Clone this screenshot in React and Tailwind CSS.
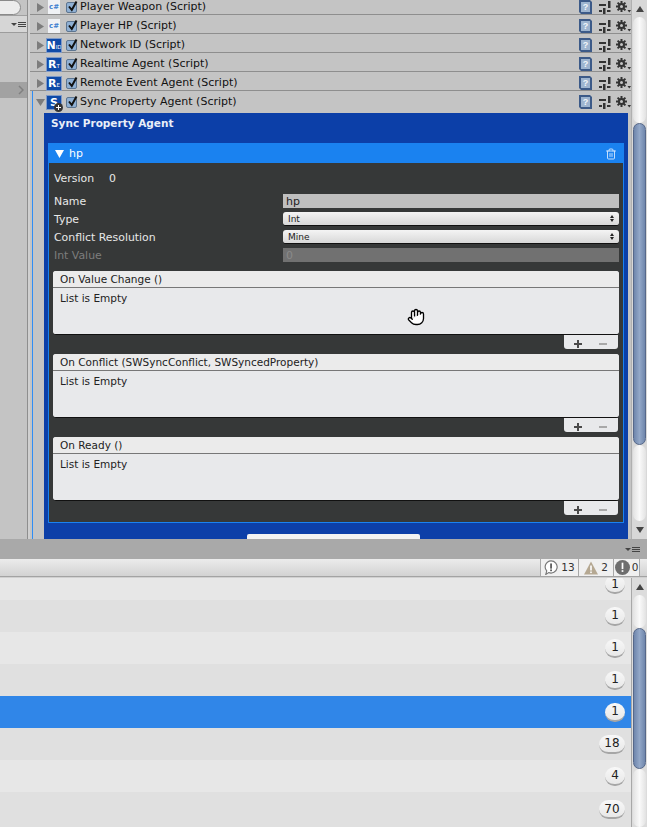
import React from 'react';
import { Hand, Trash2 } from 'lucide-react';

const scripts = [
  { name: 'Player Weapon (Script)', kind: 'cs' },
  { name: 'Player HP (Script)', kind: 'cs' },
  { name: 'Network ID (Script)', big: 'N', small: 'ID' },
  { name: 'Realtime Agent (Script)', big: 'R', small: 'T' },
  { name: 'Remote Event Agent (Script)', big: 'R', small: 'E' },
];

const consoleRows = [
  { count: '1', bg: 'bg-[#e7e7e7]', h: 'h-[22px]', clip: true },
  { count: '1', bg: 'bg-[#e0e0e0]', h: 'h-[32px]' },
  { count: '1', bg: 'bg-[#e7e7e7]', h: 'h-[32px]' },
  { count: '1', bg: 'bg-[#e0e0e0]', h: 'h-[32px]' },
  { count: '1', bg: 'bg-[#3086e8]', h: 'h-[32px]' },
  { count: '18', bg: 'bg-[#e0e0e0]', h: 'h-[32px]' },
  { count: '4', bg: 'bg-[#e7e7e7]', h: 'h-[32px]' },
  { count: '70', bg: 'bg-[#e0e0e0]', h: 'h-[35px]' },
];

const HelpBook = () => (
  <svg width="13" height="14" viewBox="0 0 13 14">
    <path d="M0 0 H11 L13 2 V14 H2 L0 12 Z" fill="#3c5a88" />
    <rect x="2" y="2" width="9" height="10" fill="#9db4cf" />
    <text x="6.5" y="10" fontSize="9" fontWeight="700" textAnchor="middle" fill="#f2f6fa" fontFamily="Liberation Sans, sans-serif">?</text>
  </svg>
);

const Sliders = () => (
  <svg width="12" height="13" viewBox="0 0 12 13" fill="#333">
    <rect x="0" y="3" width="7" height="2" />
    <rect x="9" y="0" width="2.5" height="7" />
    <rect x="0" y="9" width="3" height="2" />
    <rect x="4" y="7" width="2.5" height="6" />
    <rect x="8" y="9" width="3.5" height="2" />
  </svg>
);

const Gear = () => (
  <svg width="15" height="13" viewBox="0 0 15 13">
    <g stroke="#333" strokeWidth="2">
      <line x1="5.5" y1="0" x2="5.5" y2="11" />
      <line x1="0" y1="5.5" x2="11" y2="5.5" />
      <line x1="1.6" y1="1.6" x2="9.4" y2="9.4" />
      <line x1="9.4" y1="1.6" x2="1.6" y2="9.4" />
    </g>
    <circle cx="5.5" cy="5.5" r="3.6" fill="#333" />
    <circle cx="5.5" cy="5.5" r="1.5" fill="#c4c4c4" />
    <path d="M11.5 9 H15 L13.25 11.5 Z" fill="#333" />
  </svg>
);

const Check = () => (
  <span className="w-[11px] h-[11px] rounded-[2px] bg-[#8fb0d4] border border-[#5d7590] flex items-center justify-center shrink-0">
    <svg width="13" height="13" viewBox="0 0 13 13" className="-mt-[2px] -mr-[1px] shrink-0">
      <path d="M3 6.5 L5.8 10 L10.5 1.5" fill="none" stroke="#111" strokeWidth="2" />
    </svg>
  </span>
);

const Arrow = ({ open }) => (
  <svg width="9" height="9" viewBox="0 0 9 9" className="shrink-0">
    {open ? <path d="M0 1 H9 L4.5 8 Z" fill="#7c7c7c" /> : <path d="M1 0 L8 4.5 L1 9 Z" fill="#7c7c7c" />}
  </svg>
);

const CsIcon = () => (
  <span className="w-[12px] h-[14px] bg-[#f0f2f5] flex items-center justify-center text-[7px] font-bold text-[#3d7fd0] shrink-0">c#</span>
);

const AgentIcon = ({ big, small }) => (
  <span className="w-[16px] h-[15px] bg-[#0f4aa8] border border-[#7f9ac8] flex items-baseline justify-center text-white font-bold text-[11px] leading-[13px] shrink-0 overflow-hidden">
    {big}
    <span className="text-[5.5px] font-normal">{small}</span>
  </span>
);

const ComponentTools = () => (
  <div className="flex items-center">
    <span className="mr-[7px] flex"><HelpBook /></span>
    <span className="mr-[5px] flex"><Sliders /></span>
    <Gear />
  </div>
);

const ScriptRow = ({ s }) => (
  <div className="h-[19px] flex items-center border-b border-[#8e8e8e] pl-[6px] pt-[4px] shrink-0">
    <Arrow />
    <span className="w-[16px] ml-[1px] flex justify-center mr-[4px]">
      {s.kind === 'cs' ? <CsIcon /> : <AgentIcon big={s.big} small={s.small} />}
    </span>
    <Check />
    <span className="ml-[3px] text-[11px] font-medium text-[#111] flex-1">{s.name}</span>
    <ComponentTools />
  </div>
);

const Field = ({ label, dim, children }) => (
  <div className="flex items-center h-[14px] mb-[4px]">
    <span className={`w-[229px] text-[10.9px] pt-[2px] ${dim ? 'text-[#7d7d7d]' : 'text-[#e8e8e8]'}`}>{label}</span>
    <div className="flex-1">{children}</div>
  </div>
);

const Select = ({ value }) => (
  <div className="h-[14px] rounded-[3px] bg-gradient-to-b from-[#f4f4f4] to-[#d8d8d8] border-b border-[#111] flex items-center justify-between px-[5px] text-[9px] text-[#222]">
    <span className="pt-[2px]">{value}</span>
    <span className="flex flex-col gap-[1px]">
      <span className="border-x-[2px] border-b-[3px] border-x-transparent border-b-[#222]" />
      <span className="border-x-[2px] border-t-[3px] border-x-transparent border-t-[#222]" />
    </span>
  </div>
);

const EventBox = ({ title }) => (
  <div className="mt-[5px] first:mt-0">
    <div className="h-[64px] rounded-[3px] bg-[#e8e9eb] border-b border-[#111] flex flex-col">
      <div className="h-[17px] border-b border-[#777] px-[7px] text-[10.5px] leading-[16px] text-[#222] bg-[#ebebeb] rounded-t-[3px]">{title}</div>
      <div className="px-[7px] pt-[2px] text-[10.5px] leading-[16px] text-[#222]">List is Empty</div>
    </div>
    <div className="ml-auto mr-[1px] w-[54px] h-[14px] rounded-b-[3px] bg-[#e8e9eb] flex items-center pl-[9px] pt-[3px] gap-[15px]">
      <svg width="10" height="10" viewBox="0 0 10 10"><path d="M4 1 H6 V4 H9 V6 H6 V9 H4 V6 H1 V4 H4 Z" fill="#4a4a4a" /></svg>
      <svg width="10" height="10" viewBox="0 0 10 10"><rect x="1" y="4" width="8" height="2" fill="#a8a8a8" /></svg>
    </div>
  </div>
);

const UpArrow = () => <span className="border-x-[4px] border-b-[6px] border-x-transparent border-b-[#444]" />;
const DownArrow = () => <span className="border-x-[4px] border-t-[6px] border-x-transparent border-t-[#444]" />;

const Thumb = ({ className }) => (
  <div className={`w-[13px] mx-auto rounded-full bg-gradient-to-r from-[#6f86ac] via-[#93a8c8] to-[#6f86ac] border border-[#56688a] ${className}`} />
);

const Track = ({ className }) => (
  <div className={`w-[13px] mx-auto rounded-full bg-gradient-to-r from-[#e2e2e2] via-[#fafafa] to-[#e2e2e2] ${className}`} />
);

const Badge = ({ n }) => (
  <span className={`h-[19px] rounded-full bg-gradient-to-b from-[#f8f8f8] to-[#e8e8e8] border-b-2 border-[#a6a6a6] flex items-center justify-center text-[12px] leading-none text-[#222] shrink-0 ${n.length > 1 ? 'w-[26px]' : 'w-[20px]'}`}>{n}</span>
);

const Menu = () => (
  <span className="flex items-center gap-[1px]">
    <span className="border-x-[3px] border-t-[3px] border-x-transparent border-t-[#444]" />
    <span className="flex flex-col gap-[1px]">
      <span className="w-[8px] h-[1px] bg-[#444]" />
      <span className="w-[8px] h-[1px] bg-[#444]" />
      <span className="w-[8px] h-[1px] bg-[#444]" />
    </span>
  </span>
);

export default function App() {
  return (
    <div className="relative w-[647px] h-[827px] overflow-hidden flex flex-col bg-[#c4c4c4] font-['DejaVu_Sans',sans-serif]">
      {/* top area */}
      <div className="h-[539px] flex shrink-0">
        {/* hierarchy stub */}
        <div className="w-[28px] shrink-0 border-r border-[#8e8e8e] flex flex-col bg-[#c4c4c4]">
          <div className="h-[16px] border-b border-[#a0a0a0] overflow-hidden">
            <div className="h-[15px] -ml-[10px] w-[31px] rounded-full border border-[#8a8a8a] bg-[#ececec]" />
          </div>
          <div className="h-[17px] bg-[#d6d6d6] border-b border-[#9c9c9c] flex items-center justify-end pr-[1px]">
            <Menu />
          </div>
          <div className="mt-[49px] h-[16px] bg-[#a2a2a2] flex items-center justify-end pr-[3px]">
            <svg width="6" height="10" viewBox="0 0 6 10"><path d="M1 1 L5 5 L1 9" fill="none" stroke="#808080" strokeWidth="1.5" /></svg>
          </div>
        </div>
        <div className="w-[2px] shrink-0 bg-[#d0d0d0]" />

        {/* inspector */}
        <div className="flex-1 flex flex-col min-w-0 overflow-hidden">
          <div className="-mt-[4px] flex flex-col shrink-0">
            {scripts.map((s) => <ScriptRow key={s.name} s={s} />)}
          </div>
          <div className="flex-1 flex flex-col border-l border-[#2f8df5] ml-[2px] min-h-0">
            <div className="h-[22px] flex items-center pl-[3px] shrink-0">
              <Arrow open />
              <span className="w-[16px] ml-[1px] flex justify-center mr-[4px] relative">
                <AgentIcon big="S" small="" />
                <svg width="9" height="9" viewBox="0 0 9 9" className="absolute -right-[1px] -bottom-[2px]">
                  <circle cx="4.5" cy="4.5" r="4.5" fill="#333" />
                  <path d="M4 2 H5 V4 H7 V5 H5 V7 H4 V5 H2 V4 H4 Z" fill="#fff" />
                </svg>
              </span>
              <Check />
              <span className="ml-[3px] text-[11px] font-medium text-[#111] flex-1">Sync Property Agent (Script)</span>
              <ComponentTools />
            </div>
            <div className="flex-1 ml-[11px] mr-[3px] bg-[#0c3fa8] flex flex-col min-h-0 overflow-hidden">
              <div className="h-[30px] shrink-0 pl-[7px] pt-[3px] text-[10.5px] font-bold text-[#e8eef8]">Sync Property Agent</div>
              <div className="mx-[4px] border border-[#1a82f0] shrink-0">
                <div className="h-[20px] -mt-px bg-[#1a82f0] flex items-center justify-between pl-[6px] pr-[6px] pt-[2px] text-white text-[11px] font-medium">
                  <span className="flex items-center gap-[5px]">
                    <svg width="9" height="8" viewBox="0 0 9 8"><path d="M0 0 H9 L4.5 8 Z" fill="#fff" /></svg>
                    hp
                  </span>
                  <Trash2 size={12} strokeWidth={1.75} className="text-[#dcecff]" />
                </div>
                <div className="h-[359px] bg-[#363838] pl-[5px] pr-[4px] flex flex-col">
                  <div className="flex h-[14px] mt-[8px] mb-[9px] pt-[2px] items-center text-[10.9px] text-[#e8e8e8]">
                    <span className="w-[55px]">Version</span>
                    <span>0</span>
                  </div>
                  <Field label="Name">
                    <div className="h-[14px] bg-[#bfbfbf] px-[3px] pt-[1px] text-[11px] leading-[14px] text-[#222]">hp</div>
                  </Field>
                  <Field label="Type"><Select value="Int" /></Field>
                  <Field label="Conflict Resolution"><Select value="Mine" /></Field>
                  <Field label="Int Value" dim>
                    <div className="h-[14px] bg-[#717171] px-[3px] pt-[1px] text-[11px] leading-[14px] text-[#8a8a8a] overflow-hidden">0</div>
                  </Field>
                  <div className="mt-[5px] -ml-[1px]">
                    <EventBox title="On Value Change ()" />
                    <EventBox title="On Conflict (SWSyncConflict, SWSyncedProperty)" />
                    <EventBox title="On Ready ()" />
                  </div>
                </div>
              </div>
              <div className="mt-[11px] ml-[203px] w-[173px] h-[8px] bg-[#f2f2f2] rounded-t-[2px] shrink-0" />
            </div>
          </div>
        </div>

        {/* inspector scrollbar */}
        <div className="w-[16px] shrink-0 bg-[#d8d8d8] flex flex-col border-l border-[#b0b0b0]">
          <div className="h-[17px] flex items-center justify-center shrink-0"><UpArrow /></div>
          <Track className="h-[106px] shrink-0" />
          <Thumb className="h-[322px] shrink-0" />
          <Track className="h-[76px] shrink-0" />
          <div className="flex-1 flex items-center justify-center"><DownArrow /></div>
        </div>
      </div>

      {/* console title band */}
      <div className="h-[20px] bg-[#a9a9a9] flex items-center justify-end pr-[7px] shrink-0">
        <Menu />
      </div>

      {/* console toolbar */}
      <div className="h-[18px] bg-gradient-to-b from-[#ececec] to-[#d2d2d2] border-b border-[#a3a3a3] flex justify-end pr-[7px] shrink-0 text-[10.5px] text-[#333]">
        <div className="w-[38px] bg-[#f0f0f0] border-l border-[#a8a8a8] flex items-center justify-center gap-[3px]">
          <svg width="14" height="15" viewBox="0 0 12 13"><path d="M6 .7 A5.3 5.3 0 1 1 4 10.9 L1.5 12.5 L2.3 9.5 A5.3 5.3 0 0 1 6 .7 Z" fill="#fff" stroke="#777" /><rect x="5.3" y="3" width="1.5" height="4.5" fill="#555" /><rect x="5.3" y="8.2" width="1.5" height="1.5" fill="#555" /></svg>
          13
        </div>
        <div className="w-[35px] bg-[#f0f0f0] border-l border-[#a8a8a8] flex items-center justify-center gap-[3px]">
          <svg width="14" height="14" viewBox="0 0 14 13"><path d="M7 0 L14 13 H0 Z" fill="#b5a892" /><rect x="6.2" y="4" width="1.6" height="5" fill="#fff" /><rect x="6.2" y="10" width="1.6" height="1.6" fill="#fff" /></svg>
          2
        </div>
        <div className="w-[27px] bg-[#f0f0f0] border-x border-[#a8a8a8] flex items-center justify-center gap-[2px]">
          <svg width="15" height="15" viewBox="0 0 14 14"><circle cx="7" cy="7" r="7" fill="#6e6e6e" /><rect x="6.2" y="2.5" width="1.6" height="6" fill="#fff" /><rect x="6.2" y="9.5" width="1.6" height="1.6" fill="#fff" /></svg>
          0
        </div>
      </div>

      {/* console list */}
      <div className="flex-1 flex min-h-0 border-t border-[#d0d0d0]">
        <div className="flex-1 flex flex-col overflow-hidden">
          {consoleRows.map((r, i) => (
            <div key={i} className={`${r.h} ${r.bg} shrink-0 flex pr-[6px] justify-end ${r.clip ? 'items-end pb-[6px]' : 'items-center'}`}>
              <Badge n={r.count} />
            </div>
          ))}
        </div>
        <div className="w-[16px] shrink-0 bg-[#dcdcdc] flex flex-col border-l border-[#a8a8a8]">
          <div className="h-[17px] flex items-center justify-center shrink-0"><UpArrow /></div>
          <Track className="h-[33px] shrink-0" />
          <Thumb className="h-[141px] shrink-0" />
          <Track className="flex-1" />
        </div>
      </div>

      {/* grab cursor over the panel */}
      <div className="absolute left-[407px] top-[308px] pointer-events-none">
        <Hand size={18} strokeWidth={1.75} fill="#fff" className="text-black" />
      </div>
    </div>
  );
}
